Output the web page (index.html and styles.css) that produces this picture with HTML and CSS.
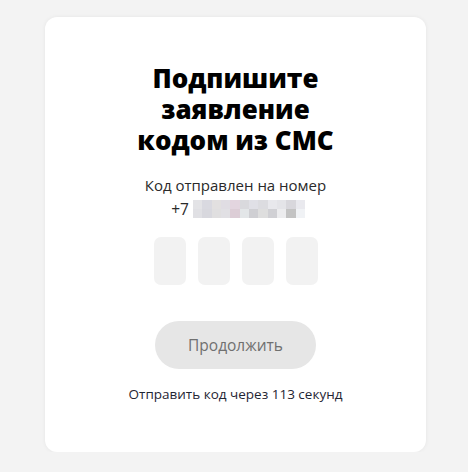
FILE: index.html
```html
<!DOCTYPE html>
<html lang="ru">
<head>
<meta charset="utf-8">
<link rel="stylesheet" href="styles.css">
</head>
<body>
<div class="card">
  <h1 class="title">Подпишите<br>заявление<br>кодом из СМС</h1>
  <p class="sub">Код отправлен на номер</p>
  <div class="phone">
    <span class="prefix">+7</span>
    <div class="mosaic">
      <i style="background:#e3e3e6"></i><i style="background:#d9d9e0"></i><i style="background:#e2e0e0"></i><i style="background:#e0dde3"></i><i style="background:#e3d5df"></i><i style="background:#d9d9dd"></i><i style="background:#e0e0e6"></i><i style="background:#dcdce0"></i><i style="background:#e8e8ec"></i><i style="background:#e4e4e8"></i><i style="background:#d8d7dc"></i><i style="background:#e9e9ee"></i>
      <i style="background:#e0e0e4"></i><i style="background:#d8d8de"></i><i style="background:#e0dfe0"></i><i style="background:#e1e0e4"></i><i style="background:#dccdd6"></i><i style="background:#e3e6e8"></i><i style="background:#cfcfd3"></i><i style="background:#dedede"></i><i style="background:#d0d0d4"></i><i style="background:#ececee"></i><i style="background:#c3c3c3"></i><i style="background:#f0f2f5"></i>
    </div>
  </div>
  <div class="code">
    <span class="cell"></span><span class="cell"></span><span class="cell"></span><span class="cell"></span>
  </div>
  <button class="btn" type="button">Продолжить</button>
  <p class="resend">Отправить код через 113 секунд</p>
</div>
</body>
</html>
```
FILE: styles.css
```css
html, body {
  margin: 0;
  padding: 0;
  background: #f3f3f3;
}
body {
  font-family: "Open Sans", "Noto Sans", sans-serif;
  color: #222;
  padding: 17px 0 0 45px;
}
.card {
  box-sizing: border-box;
  width: 381px;
  height: 435px;
  background: #fff;
  border-radius: 12px;
  box-shadow: 0 0 4px rgba(0,0,0,0.06);
  display: flex;
  flex-direction: column;
  align-items: center;
  padding-top: 46px;
}
.title {
  margin: 0;
  font-family: "Open Sans", sans-serif;
  font-weight: 800;
  font-size: 26px;
  line-height: 31px;
  text-align: center;
  color: #000;
}
.sub {
  margin: 19px 0 0;
  font-size: 15px;
  line-height: 20px;
  color: #2a2a2a;
}
.phone {
  display: flex;
  align-items: center;
  gap: 4px;
  margin-top: 4px;
  height: 20px;
  margin-left: 5px;
}
.prefix {
  font-size: 15.5px;
  color: #2a2a2a;
}
.mosaic {
  display: grid;
  grid-template-columns: repeat(12, 9.33px);
  grid-template-rows: repeat(2, 9px);
}
.mosaic i {
  display: block;
}
.code {
  display: flex;
  gap: 12px;
  margin-top: 18px;
}
.cell {
  width: 32px;
  height: 48px;
  border-radius: 7px;
  background: #f2f2f2;
}
.btn {
  margin-top: 36px;
  width: 161px;
  height: 48px;
  border: 0;
  border-radius: 24px;
  background: #e6e6e6;
  color: #707070;
  font-family: "Open Sans", sans-serif;
  font-size: 15.5px;
}
.resend {
  margin: 16px 0 0;
  font-size: 13.5px;
  line-height: 18px;
  color: #1f2533;
}
```
